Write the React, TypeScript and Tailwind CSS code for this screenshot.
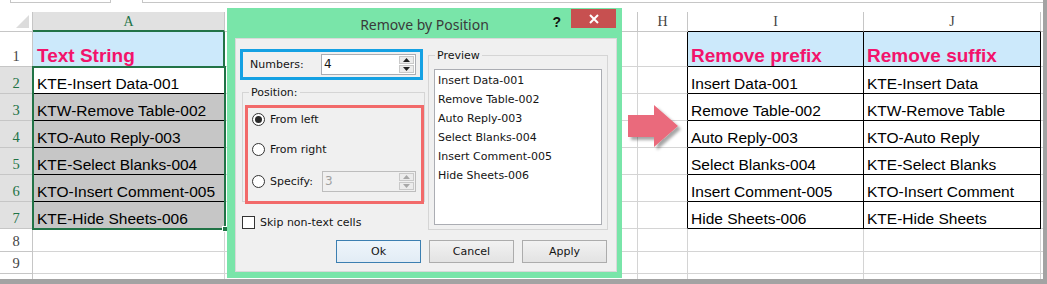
import React from 'react'

interface SheetRow {
  n: number
  h: string
  a?: string
  i?: string
  j?: string
}

const rows: SheetRow[] = [
  { n: 1, h: 'h-[35px]', a: 'Text String', i: 'Remove prefix', j: 'Remove suffix' },
  { n: 2, h: 'h-[27px]', a: 'KTE-Insert Data-001', i: 'Insert Data-001', j: 'KTE-Insert Data' },
  { n: 3, h: 'h-[27px]', a: 'KTW-Remove Table-002', i: 'Remove Table-002', j: 'KTW-Remove Table' },
  { n: 4, h: 'h-[27px]', a: 'KTO-Auto Reply-003', i: 'Auto Reply-003', j: 'KTO-Auto Reply' },
  { n: 5, h: 'h-[27px]', a: 'KTE-Select Blanks-004', i: 'Select Blanks-004', j: 'KTE-Select Blanks' },
  { n: 6, h: 'h-[27px]', a: 'KTO-Insert Comment-005', i: 'Insert Comment-005', j: 'KTO-Insert Comment' },
  { n: 7, h: 'h-[27px]', a: 'KTE-Hide Sheets-006', i: 'Hide Sheets-006', j: 'KTE-Hide Sheets' },
  { n: 8, h: 'h-[23px]' },
  { n: 9, h: 'h-[22px]' },
  { n: 10, h: 'h-[22px]' },
]

const preview = [
  'Insert Data-001',
  'Remove Table-002',
  'Auto Reply-003',
  'Select Blanks-004',
  'Insert Comment-005',
  'Hide Sheets-006',
]

const grid = 'border-[#d4d4d4]'

function Spinner({ disabled = false }: { disabled?: boolean }) {
  const tri = disabled ? '#a8a8a8' : '#222'
  return (
    <div className="flex flex-col gap-px w-[15px] mr-px">
      <div className="h-[8px] border border-[#c9c9c9] bg-[#ececec] flex items-center justify-center">
        <svg width="7" height="4" viewBox="0 0 7 4"><path d="M0 4 L3.5 0 L7 4 Z" fill={tri} /></svg>
      </div>
      <div className="h-[8px] border border-[#c9c9c9] bg-[#ececec] flex items-center justify-center">
        <svg width="7" height="4" viewBox="0 0 7 4"><path d="M0 0 L3.5 4 L7 0 Z" fill={tri} /></svg>
      </div>
    </div>
  )
}

function Radio({ checked = false, label }: { checked?: boolean; label: string }) {
  return (
    <div className="flex items-center h-[13px]">
      <div className="w-[13px] h-[13px] rounded-full border border-[#333] bg-white flex items-center justify-center">
        {checked && <div className="w-[7px] h-[7px] rounded-full bg-[#2a2a2a]" />}
      </div>
      <span className="ml-[5px]">{label}</span>
    </div>
  )
}

function Btn({ label, focused = false }: { label: string; focused?: boolean }) {
  return (
    <div
      className={`w-[85px] h-[23px] flex items-center justify-center border bg-gradient-to-b ${
        focused
          ? 'border-[#3c7fb1] from-[#eef5fb] to-[#e2ecf5]'
          : 'border-[#acacac] from-[#f2f2f2] to-[#e3e3e3]'
      }`}
    >
      {label}
    </div>
  )
}

function Dialog() {
  return (
    <div className="absolute left-[227px] top-[8px] w-[395px] h-[270px] bg-[#79e5a9] flex flex-col">
      <div className="grid grid-cols-[1fr_auto_1fr] h-[30px] shrink-0">
        <div />
        <div className="flex items-center pt-[2px] font-['Noto_Sans',sans-serif] text-[14px] text-[#3a3a3a]">
          Remove by Position
        </div>
        <div className="flex justify-end items-start pt-px pr-[6px]">
          <span className="mt-[3px] mr-[10px] font-['Liberation_Sans',sans-serif] font-bold text-[14px] text-[#111]">?</span>
          <div className="w-[45px] h-[19px] bg-[#c75050] flex items-center justify-center">
            <svg width="10" height="10" viewBox="0 0 10 10">
              <path d="M1 1 L9 9 M9 1 L1 9" stroke="#fff" strokeWidth="2" />
            </svg>
          </div>
        </div>
      </div>

      <div className="flex-1 pl-[8px] pr-[5px] pb-[6px]">
        <div className="h-full bg-[#f0f0f0] border border-[#d9d9d9] pt-[10px] flex flex-col font-['DejaVu_Sans',sans-serif] text-[11px] leading-[13px] text-[#141414]">
          <div className="flex">
            {/* left column */}
            <div className="w-[192px] flex flex-col">
              <div className="ml-[4px] w-[183px] h-[31px] border-[3px] border-[#15a1e3] flex items-center pl-[7px] pr-[4px]">
                <span>Numbers:</span>
                <div className="ml-auto w-[95px] h-[21px] border border-[#abadb3] bg-white flex items-center justify-between">
                  <span className="pl-[2px] text-[12px]">4</span>
                  <Spinner />
                </div>
              </div>

              <fieldset className="ml-[6px] mt-[6px] w-[182px] border border-[#d5d5d5]">
                <legend className="ml-[6px] px-[2px] leading-[13px]">Position:</legend>
                <div className="ml-[2px] mt-[6px] mb-[-3px] w-[179px] h-[99px] border-[3px] border-[#f26a6a] flex flex-col pl-[4px] pr-[5px] pt-[5px]">
                  <Radio checked label="From left" />
                  <div className="mt-[17px]">
                    <Radio label="From right" />
                  </div>
                  <div className="mt-[15px] flex items-center">
                    <Radio label="Specify:" />
                    <div className="ml-auto w-[94px] h-[21px] border border-[#bdbdbd] bg-[#f0f0f0] flex items-center justify-between">
                      <span className="pl-[2px] text-[12px] text-[#a0a0a0]">3</span>
                      <Spinner disabled />
                    </div>
                  </div>
                </div>
              </fieldset>

              <div className="ml-[6px] mt-[14px] flex items-center">
                <div className="w-[13px] h-[13px] border border-[#333] bg-white" />
                <span className="ml-[5px]">Skip non-text cells</span>
              </div>
            </div>

            {/* preview */}
            <fieldset className="w-[180px] border border-[#d5d5d5] pb-[4px]">
              <legend className="ml-[6px] px-[2px] leading-[13px]">Preview</legend>
              <div className="ml-[5px] mt-[7px] w-[168px] h-[156px] bg-white border border-[#abadb3] pl-[3px] pt-px">
                {preview.map(p => (
                  <div key={p} className="leading-[19px]">{p}</div>
                ))}
              </div>
            </fieldset>
          </div>

          <div className="mt-[10px] flex justify-end gap-[8px] pr-[9px]">
            <Btn label="Ok" focused />
            <Btn label="Cancel" />
            <Btn label="Apply" />
          </div>
        </div>
      </div>
    </div>
  )
}

function Arrow() {
  return (
    <svg className="absolute left-[624px] top-[101px]" width="62" height="56" viewBox="0 0 62 56">
      <defs>
        <filter id="sh" x="-20%" y="-20%" width="150%" height="150%">
          <feDropShadow dx="3" dy="3" stdDeviation="1.6" floodColor="#000" floodOpacity="0.35" />
        </filter>
      </defs>
      <path d="M4 14 H30 V4 L54 25 L30 46 V36 H4 Z" fill="#ea6b7b" filter="url(#sh)" />
    </svg>
  )
}

export default function App() {
  return (
    <div className="w-[1047px] h-[284px] bg-white flex flex-col border-r-4 border-b-[5px] border-[#a3a3a3] font-['Liberation_Sans',Arial,sans-serif] overflow-hidden">
      <div className="relative w-[1043px] h-[279px] overflow-hidden">
        {/* formula bar remnants */}
        <div className="h-[12px] flex">
          <div className="ml-[10px] w-[101px] h-[3px] border-x border-b border-[#c6c6c6]" />
          <div className="ml-[31px] flex-1 h-[3px] border-l border-b border-[#c6c6c6]" />
        </div>

        {/* column headers */}
        <div className="flex h-[20px] font-['Liberation_Serif',serif] text-[14px] text-[#444]">
          <div className="w-[33px] border-r border-b border-[#c6c6c6] flex items-end justify-end p-[3px]">
            <svg width="13" height="13" viewBox="0 0 13 13"><path d="M13 0 V13 H0 Z" fill="#dcdcdc" /></svg>
          </div>
          <div className="w-[192px] bg-[#e1e1e1] border-r border-[#c6c6c6] border-b-2 border-b-[#217346] flex items-center justify-center text-[#217346]">A</div>
          <div className="w-[413px] border-r border-b border-[#c6c6c6]" />
          <div className="w-[50px] border-r border-b border-[#c6c6c6] flex items-center justify-center">H</div>
          <div className="w-[176px] border-r border-[#c6c6c6] border-b border-b-black flex items-center justify-center">I</div>
          <div className="w-[177px] border-r border-[#c6c6c6] border-b border-b-black flex items-center justify-center">J</div>
          <div className="flex-1 border-b border-[#c6c6c6]" />
        </div>

        {rows.map(r => {
          const inTable = r.n <= 7
          const selected = r.n >= 2 && r.n <= 7
          const head = r.n === 1
          return (
            <div key={r.n} className={`flex ${r.h}`}>
              <div
                className={`w-[33px] border-r border-b border-[#c6c6c6] flex items-end justify-center font-['Liberation_Serif',serif] text-[14.5px] leading-[20px] ${
                  selected ? 'bg-[#e1e1e1] text-[#217346]' : 'text-[#444]'
                }`}
              >
                {r.n}
              </div>
              <div
                className={`w-[192px] flex items-end pl-[4px] whitespace-nowrap ${
                  head
                    ? 'bg-[#cce9fb] border-r-2 border-r-[#217346] border-b border-b-[#d4d4d4] text-[#f3136b] font-bold text-[19px] leading-[20px]'
                    : selected
                      ? `border-r border-b border-b-black ${grid} text-[15.5px] leading-[18px] text-black ${r.n === 2 ? 'bg-white' : 'bg-[#c6c6c6]'}`
                      : `border-r border-b ${grid}`
                }`}
              >
                {r.a}
              </div>
              <div className={`w-[413px] border-r border-b ${grid}`} />
              <div className={`w-[50px] border-b ${grid} border-r ${inTable ? 'border-r-black' : ''}`} />
              <div
                className={`w-[176px] border-r border-b flex items-end pl-[3px] whitespace-nowrap ${
                  inTable ? 'border-black' : grid
                } ${head ? 'bg-[#cce9fb] text-[#f3136b] font-bold text-[19px] leading-[20px]' : 'text-[15.5px] leading-[18px] text-black'}`}
              >
                {r.i}
              </div>
              <div
                className={`w-[177px] border-r border-b flex items-end pl-[3px] whitespace-nowrap ${
                  inTable ? 'border-black' : grid
                } ${head ? 'bg-[#cce9fb] text-[#f3136b] font-bold text-[19px] leading-[20px]' : 'text-[15.5px] leading-[18px] text-black'}`}
              >
                {r.j}
              </div>
              <div className={`flex-1 border-b ${grid}`} />
            </div>
          )
        })}

        {/* selection outline A2:A7 with fill handle */}
        <div className="absolute left-[32px] top-[66px] w-[194px] h-[164px] border-2 border-[#217346]" />
        <div className="absolute left-[222px] top-[226px] w-[6px] h-[6px] bg-[#217346] border border-white" />

        <Dialog />
        <Arrow />
      </div>
    </div>
  )
}
